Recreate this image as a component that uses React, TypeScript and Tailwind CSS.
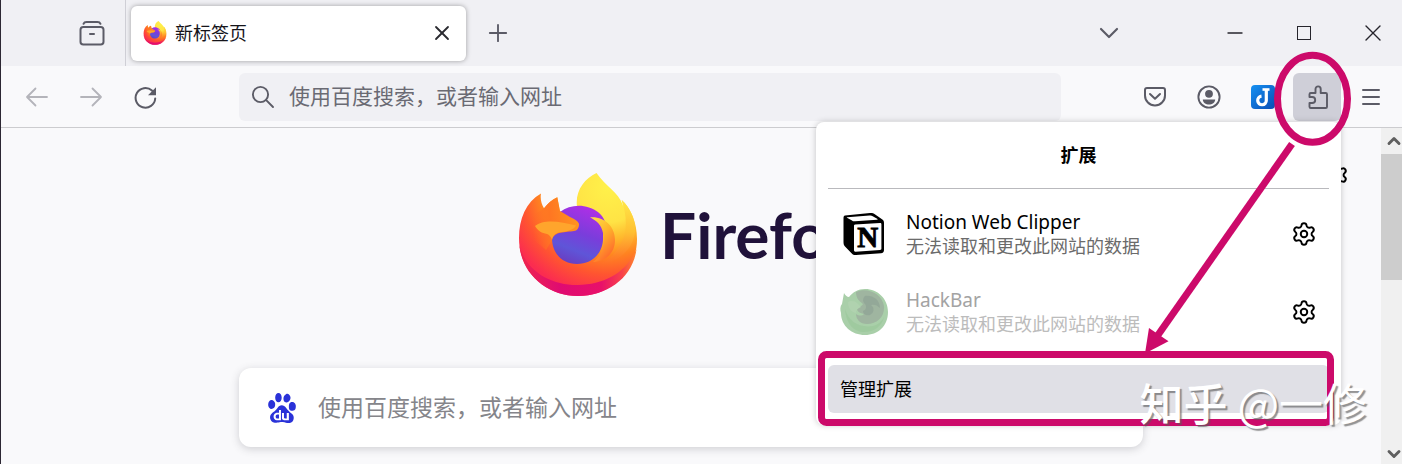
import type { ReactNode } from "react";
import { ChevronDown, ChevronUp, Menu, Minus, Plus, Settings, X } from "lucide-react";
import { SiBaidu } from "react-icons/si";

function FirefoxLogo({ id, className }: { id: string; className: string }) {
  return (
    <svg viewBox="0 0 120 124" className={className} aria-hidden="true">
      <defs>
        <radialGradient id={`${id}-body`} gradientUnits="userSpaceOnUse" cx="90" cy="14" r="118">
          <stop offset="0" stopColor="#fff14a" />
          <stop offset="0.3" stopColor="#ffe345" />
          <stop offset="0.45" stopColor="#ffb62c" />
          <stop offset="0.58" stopColor="#ff8420" />
          <stop offset="0.74" stopColor="#ff5530" />
          <stop offset="0.92" stopColor="#fb2c50" />
        </radialGradient>
        <linearGradient id={`${id}-low`} x1="0" x2="1" y1="0" y2="0">
          <stop offset="0" stopColor="#f0264c" />
          <stop offset="0.35" stopColor="#df0b72" />
          <stop offset="0.7" stopColor="#e8106a" />
          <stop offset="0.88" stopColor="#f8434a" />
          <stop offset="1" stopColor="#ff8a2a" />
        </linearGradient>
        <linearGradient id={`${id}-globe`} x1="0.65" x2="0.3" y1="0" y2="1">
          <stop offset="0" stopColor="#ae2fe6" />
          <stop offset="0.45" stopColor="#7a3ddb" />
          <stop offset="0.75" stopColor="#5f55d8" />
          <stop offset="1" stopColor="#6a3cc0" />
        </linearGradient>
        <linearGradient id={`${id}-curl`} x1="0" x2="0.6" y1="0" y2="1">
          <stop offset="0" stopColor="#ffe148" />
          <stop offset="0.5" stopColor="#ffb52c" />
          <stop offset="1" stopColor="#ff6a2c" />
        </linearGradient>
        <linearGradient id={`${id}-lick`} x1="0" x2="0" y1="0" y2="1">
          <stop offset="0" stopColor="#ffe748" />
          <stop offset="0.5" stopColor="#ffc032" />
          <stop offset="1" stopColor="#ff6e2a" stopOpacity="0.4" />
        </linearGradient>
        <linearGradient id={`${id}-head`} gradientUnits="userSpaceOnUse" x1="14" x2="60" y1="50" y2="44">
          <stop offset="0" stopColor="#ff6a26" stopOpacity="0" />
          <stop offset="0.4" stopColor="#ff7622" />
          <stop offset="1" stopColor="#ff9420" />
        </linearGradient>
      </defs>
      <path
        d="M23 20.500C8 29 1 46 1 65c0 33 26 58 59 58s59-25 59-57c0-16-6-31-15.300-39l1.500 6C100 18 88 14 78.500 0 66 6 57 18 59 34L42 39l-2.700-14.700C34 27 30 30 26 35.300 23.500 31 22 26 23 20.500Z"
        fill={`url(#${id}-body)`}
      />
      <path d="M1.300 72C8 99 34 112.500 60 112c27-.5 49-13 58.500-36C115 104 90 123 60 123S4 102 1.300 72Z" fill={`url(#${id}-low)`} />
      <path d="M103.700 27c5 15 6 30 0 42-5 10-12 17-20 22 18-3 30-14 33-30 2-12-4-26-13-34Z" fill={`url(#${id}-lick)`} />
      <path d="M42 39c8-6 19-8 29-4.500 8 2.500 13 7 15.500 13L85 63c1 17-11 28-26 28S34 80 34 65Z" fill={`url(#${id}-globe)`} />
      <path d="M26 35.300C30 30 34 27 39.300 24.300L42 38l10 6c6 3 9.500 5 9 8-.5 4-2 5.500-5 6-8 1.500-20 0-22 9l-6 10L8 60l8-18Z" fill={`url(#${id}-head)`} />
      <path d="M17 53c8-7 25-5 41-.5-2 4-8 6-14 6.500-6 .6-9 3-10 8-1-3-3-6-6-6.300-5-.7-8-3-11-7.700Z" fill="#ffa52c" />
      <path d="M72 44.300C86 43 97 53 97 67c0 13-9 21-22 22 10-7 12-20 10-29-1.500-8-6-12-13-15.700Z" fill={`url(#${id}-curl)`} />
    </svg>
  );
}

function ToolButton({ label, active, disabled, children }: { label: string; active?: boolean; disabled?: boolean; children: ReactNode }) {
  return (
    <button
      type="button"
      aria-label={label}
      disabled={disabled}
      className={`flex size-12 shrink-0 items-center justify-center rounded-md text-[#5b5b66] disabled:text-[#b4b4ba] ${active ? "bg-[#cfcfd8]" : ""}`}
    >
      {children}
    </button>
  );
}

function ArrowIcon({ back }: { back?: boolean }) {
  return (
    <svg viewBox="0 0 24 24" className="size-6" fill="none" stroke="currentColor" strokeWidth="1.800" strokeLinecap="round" strokeLinejoin="round">
      <path d={back ? "M22 12H2M10.500 3.500 2 12l8.500 8.500" : "M2 12h20M13.500 3.500 22 12l-8.500 8.500"} />
    </svg>
  );
}

function ReloadIcon() {
  return (
    <svg viewBox="0 0 24 24" className="size-6" fill="none" stroke="currentColor" strokeWidth="2" strokeLinecap="round">
      <path d="M22.200 13.500A9.800 9.800 0 1 1 19 5.600L20 6.600" />
      <path d="M23 2.300v8h-8Z" fill="currentColor" stroke="none" />
    </svg>
  );
}

function FirefoxViewIcon() {
  return (
    <svg viewBox="0 0 26 26" className="size-[26px]" fill="none" stroke="currentColor" strokeWidth="2" strokeLinecap="round">
      <rect x="1.500" y="7" width="23" height="17.500" rx="2.800" />
      <path d="M4.500 3.800C5 2.600 6 2 7.500 2h11c1.500 0 2.500.6 3 1.800M11 14h4" />
    </svg>
  );
}

function SearchIcon() {
  return (
    <svg viewBox="0 0 24 24" className="size-6 shrink-0" fill="none" stroke="currentColor" strokeWidth="1.900" strokeLinecap="round">
      <circle cx="9.500" cy="9.500" r="7.600" />
      <path d="m15.200 15.200 6.800 6.800" />
    </svg>
  );
}

function PocketIcon() {
  return (
    <svg viewBox="0 0 24 24" className="size-6" fill="none" stroke="currentColor" strokeWidth="2" strokeLinecap="round" strokeLinejoin="round">
      <path d="M4 3h16a2 2 0 0 1 2 2v5.500a10 10 0 0 1-20 0V5a2 2 0 0 1 2-2Z" />
      <path d="m7 9 5 4.800L17 9" />
    </svg>
  );
}

function AccountIcon() {
  return (
    <svg viewBox="0 0 24 24" className="size-6" fill="none" stroke="currentColor" strokeWidth="1.900">
      <circle cx="12" cy="12" r="10.600" />
      <circle cx="12" cy="8.800" r="3.900" fill="currentColor" stroke="none" />
      <path d="M5.800 14.500h12.400c0 3-3 5-6.200 5s-6.200-2-6.200-5Z" fill="currentColor" stroke="none" />
    </svg>
  );
}

function JoplinIcon() {
  return (
    <svg viewBox="0 0 24 24" className="size-6">
      <defs>
        <linearGradient id="joplin" x1="0" x2="1" y1="0" y2="1">
          <stop offset="0" stopColor="#1591f2" />
          <stop offset="1" stopColor="#0a4cb4" />
        </linearGradient>
      </defs>
      <rect width="24" height="24" rx="4" fill="url(#joplin)" />
      <path d="M15.300 5v10.300a4.300 4.300 0 1 1-4.800-4.100" fill="none" stroke="#fff" strokeWidth="3.200" />
      <path d="M11.500 3.200h7v2.600h-7Z" fill="#fff" />
    </svg>
  );
}

function PuzzleIcon() {
  return (
    <svg viewBox="0 0 24 24" className="size-6" fill="none" stroke="currentColor" strokeWidth="1.900" strokeLinejoin="round">
      <path d="M4.500 12V9.300A1.300 1.300 0 0 1 5.800 8h4.700V4a2.600 2.600 0 0 1 5.200 0V8h5A1.300 1.300 0 0 1 22 9.300v12.400a1.300 1.300 0 0 1-1.300 1.300H5.800a1.300 1.300 0 0 1-1.300-1.300V18h2.700a3 3 0 0 0 0-6Z" />
    </svg>
  );
}

function NotionIcon() {
  return (
    <svg viewBox="0 0 44 44" className="size-11" aria-hidden="true">
      <path d="M3 3.500 28 1c2-.2 3 0 4.500 1L40 7.300c1.500 1 2 2 2 3.700v27c0 2-1 3-3 3.200l-25 1.700c-2 .1-3-.2-4.200-1.500L3 34.500c-1.200-1.500-1.500-2.500-1.500-4.500V6c0-1.500.5-2.400 1.500-2.500Z" fill="#000" />
      <path d="M5.300 5.200 27.500 3.500c1.500-.1 2.200 0 3.200.7l4.500 2.600c.8.6.4.9-.3 1L13 9.300c-1.500.1-2-.1-3-.8L5 5.800c-.5-.4-.3-.6.3-.6Z" fill="#fff" />
      <path d="m13 12.600 25-1.700c1 0 1.400.5 1.400 1.300v24.400c0 1-.4 1.400-1.400 1.500l-24.500 1.600c-1 .1-1.500-.4-1.500-1.400V14c0-.9.300-1.300 1-1.400Z" fill="#fff" />
      <text x="25.700" y="34.500" textAnchor="middle" fontFamily="Liberation Serif, serif" fontWeight="700" fontSize="29" stroke="#000" strokeWidth="0.900">
        N
      </text>
    </svg>
  );
}

function HackBarIcon() {
  return (
    <svg viewBox="0 0 48 48" className="size-12" aria-hidden="true">
      <path d="M4 5c1 2 3 4 5 4C13 4 18 1 25 1c13 0 23 10 23 23 0 14-10 23-23 23S1 38 1 25c-1-3-1-7 1-9Z" fill="#a9cfa9" />
      <path d="M16 4c12-5 26 2 28 14 1 11-7 18-17 18-7 0-11-5-11-10 3 2 6 2 8 0-6-1-8-4-7-8 3 1 5 0 6-2-4-3-7-6-7-12Z" fill="#9fb5a0" />
      <path d="M25 8c8-1 15 4 15 12-3-3-6-4-9-3 4 3 3 8-1 10-4 1-7-1-7-4 3-1 4-4 2-7-2-2-3-5 0-8Z" fill="#8fa294" opacity="0.700" />
      <path d="M5 21c4 13 14 19 28 17 5-1 9-5 11-9-2 9-10 15-20 15S6 36 5 21Z" fill="#95c596" opacity="0.500" />
      <path d="M8 14c3-2 7-1 9 1l4 4c-3 1-5 3-5 6-5-1-8-5-8-11Z" fill="#b0d2af" />
    </svg>
  );
}

function ExtensionRow({ icon, name, dimmed }: { icon: ReactNode; name: string; dimmed?: boolean }) {
  return (
    <li className="flex h-[78px] items-center pr-3 pl-3">
      <span className="flex size-12 shrink-0 items-center justify-center">{icon}</span>
      <span className={`ml-[18px] flex flex-1 flex-col leading-6 ${dimmed ? "text-[#a3a3a3]" : "text-black"}`}>
        <span className="text-[19px]">{name}</span>
        <span className={`text-lg leading-6 ${dimmed ? "text-[#bcbcbc]" : "text-[#6b6b6b]"}`}>无法读取和更改此网站的数据</span>
      </span>
      <button type="button" aria-label={`${name} 设置`} className="flex items-center justify-center text-black">
        <Settings className="size-[26px]" strokeWidth={1.8} />
      </button>
    </li>
  );
}

function ExtensionsPanel() {
  return (
    <section
      aria-label="扩展"
      className="absolute top-[122px] right-[61px] w-[525px] rounded-lg bg-white px-3 pb-3 shadow-[0_0_6px_rgba(0,0,0,0.22)]"
    >
      <h2 className="flex h-[67px] items-center justify-center border-b border-[#b9b9bd] text-lg font-bold text-black">扩展</h2>
      <ul className="pt-[6px] pb-[14px]">
        <ExtensionRow icon={<NotionIcon />} name="Notion Web Clipper" />
        <ExtensionRow icon={<HackBarIcon />} name="HackBar" dimmed />
      </ul>
      <button type="button" className="flex h-12 w-full items-center rounded-md bg-[#e0e0e6] px-3 text-lg text-black">
        管理扩展
      </button>
    </section>
  );
}

function Annotations() {
  return (
    <svg viewBox="802 0 600 464" className="pointer-events-none absolute top-0 right-0 h-[464px] w-[600px]" fill="none" stroke="#cc0a6a" strokeWidth="7" aria-hidden="true">
      <ellipse cx="1312.500" cy="98.800" rx="35" ry="43.500" />
      <path d="M1292 144 1158 335" />
      <path d="M1149 328l19.500 13.300L1145 353.500Z" fill="#cc0a6a" stroke="none" />
      <rect x="821.500" y="354.500" width="509" height="68" rx="5" />
    </svg>
  );
}

export default function App() {
  return (
    <div className="relative flex min-h-screen flex-col overflow-hidden border-l border-[#2c2733] bg-[#f9f9fb] font-['Noto_Sans','Noto_Sans_CJK_SC',sans-serif] text-[#15141a]">
      <header>
        <div className="flex h-[66px] items-center bg-[#f0f0f4] pr-[5px]">
          <div className="flex h-full w-[125px] shrink-0 items-center justify-end border-r border-[#cfcfd6] pr-[9px]">
            <ToolButton label="Firefox View">
              <FirefoxViewIcon />
            </ToolButton>
          </div>
          <div className="ml-[5px] flex h-[55px] w-[335px] shrink-0 items-center rounded-md bg-white pr-3 pl-3 shadow-[0_0_5px_rgba(0,0,0,0.35)]">
            <FirefoxLogo id="tab" className="size-6" />
            <span className="ml-2 flex-1 text-lg">新标签页</span>
            <button type="button" aria-label="关闭标签页" className="flex items-center justify-center text-[#2a2a30]">
              <X className="size-6" strokeWidth={1.8} />
            </button>
          </div>
          <div className="ml-2 flex-1">
            <ToolButton label="新建标签页">
              <Plus className="size-[28px]" strokeWidth={1.6} />
            </ToolButton>
          </div>
          <ToolButton label="列出所有标签页">
            <ChevronDown className="size-8" strokeWidth={1.6} />
          </ToolButton>
          <div className="ml-[78px] flex items-center gap-[21px] text-[#26252c]">
            <button type="button" aria-label="最小化" className="flex size-12 items-center justify-center">
              <Minus className="size-6" strokeWidth={1.4} />
            </button>
            <button type="button" aria-label="最大化" className="flex size-12 items-center justify-center">
              <span className="size-[14px] border border-current" />
            </button>
            <button type="button" aria-label="关闭" className="flex size-12 items-center justify-center">
              <X className="size-7" strokeWidth={1.2} />
            </button>
          </div>
        </div>
        <nav className="flex h-[62px] items-center gap-[6px] border-b border-[#cccccf] pr-[7px] pl-3">
          <ToolButton label="后退" disabled>
            <ArrowIcon back />
          </ToolButton>
          <ToolButton label="前进" disabled>
            <ArrowIcon />
          </ToolButton>
          <ToolButton label="刷新">
            <ReloadIcon />
          </ToolButton>
          <label className="mx-16 flex h-12 min-w-0 flex-1 items-center gap-[14px] rounded-md bg-[#f0f0f4] px-3 text-[#5b5b66]">
            <SearchIcon />
            <input
              type="text"
              aria-label="地址栏"
              placeholder="使用百度搜索，或者输入网址"
              className="w-full bg-transparent text-[21px] outline-none placeholder:text-[#6a6a73]"
            />
          </label>
          <ToolButton label="Pocket">
            <PocketIcon />
          </ToolButton>
          <ToolButton label="账户">
            <AccountIcon />
          </ToolButton>
          <ToolButton label="Joplin">
            <JoplinIcon />
          </ToolButton>
          <ToolButton label="扩展" active>
            <PuzzleIcon />
          </ToolButton>
          <ToolButton label="菜单">
            <Menu className="size-6" strokeWidth={2} />
          </ToolButton>
        </nav>
      </header>

      <div className="flex flex-1">
        <main className="relative flex-1 px-[238px] pt-[45px]">
          <button type="button" aria-label="个性化" className="absolute top-[34px] right-[32px] text-black">
            <Settings className="size-[26px]" strokeWidth={1.8} />
          </button>
          <div className="flex items-center justify-center gap-[22px]">
            <FirefoxLogo id="hero" className="h-[124px] w-[120px]" />
            <h1 className="w-[204px] font-[Lato,sans-serif] text-[64px] leading-none font-bold text-[#20123a]">Firefox</h1>
          </div>
          <label className="mt-[71px] flex h-[79px] items-center gap-[21px] rounded-xl bg-white px-7 shadow-[0_2px_8px_rgba(58,57,68,0.22)]">
            <SiBaidu className="size-[30px] shrink-0 text-[#2a32d8]" />
            <input
              type="text"
              aria-label="搜索"
              placeholder="使用百度搜索，或者输入网址"
              className="w-full bg-transparent text-[23px] outline-none placeholder:text-[#85858a]"
            />
          </label>
        </main>
        <div className="flex w-[21px] shrink-0 flex-col items-center bg-[#f0f0f0] text-[#5f5f5f]">
          <ChevronUp className="ml-1 h-[26px] w-5 shrink-0" strokeWidth={3.5} />
          <div className="h-[126px] w-full bg-[#cdcdcd]" />
          <ChevronDown className="mt-auto ml-1 size-5 shrink-0" strokeWidth={3.5} />
        </div>
      </div>

      <ExtensionsPanel />
      <Annotations />
      <p className="absolute top-[372px] right-[35px] font-['Noto_Sans_CJK_SC',sans-serif] text-[44px] leading-[60px] font-medium whitespace-nowrap text-white [text-shadow:2px_2px_1px_rgba(90,90,90,0.65)]">
        知乎 <span className="font-normal">@一修</span>
      </p>
    </div>
  );
}
